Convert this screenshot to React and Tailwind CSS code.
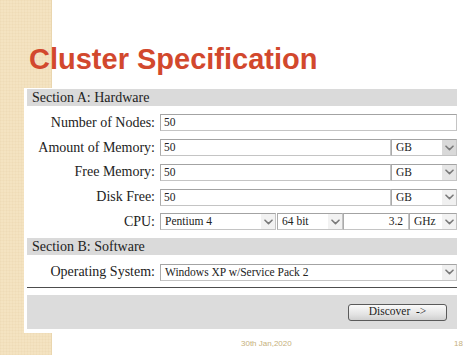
import React from "react";

const serif = "font-['Liberation_Serif','Times_New_Roman',serif]";

function Chevron() {
  return (
    <svg width="9" height="6" viewBox="0 0 9 6" fill="none">
      <path d="M1 1.2 L4.5 4.6 L8 1.2" stroke="#7a7a7a" strokeWidth="1.6" strokeLinecap="round" strokeLinejoin="round" />
    </svg>
  );
}

function Input({ children, className = "", right = false }) {
  return (
    <div
      className={`h-full border border-[#c4c4c4] border-t-[#a3a3a3] border-l-[#ababab] bg-white text-[11.5px] text-[#222] flex items-center ${
        right ? "justify-end pr-[5px]" : "pl-[3px]"
      } ${className}`}
    >
      {children}
    </div>
  );
}

function Select({ children, className = "", arrowBg = "bg-[#e3e3e3]" }) {
  return (
    <div
      className={`h-full border border-[#c4c4c4] border-t-[#a3a3a3] border-l-[#ababab] bg-white text-[11.5px] text-[#222] flex items-center ${className}`}
    >
      <div className="flex-1 pl-[4px] truncate">{children}</div>
      <div className={`w-[14px] h-full flex items-center justify-center ${arrowBg}`}>
        <Chevron />
      </div>
    </div>
  );
}

function Row({ label, children }) {
  return (
    <div className="flex items-center h-[24.75px]">
      <div className="w-[128px] text-right text-[14px] leading-none text-[#222]">{label}</div>
      <div className="ml-[5px] w-[297px] h-[17px] flex">{children}</div>
    </div>
  );
}

function Header({ children, className = "" }) {
  return (
    <div className={`h-[17px] bg-[#dadada] pl-[5px] flex items-center text-[14px] leading-none text-[#222] ${className}`}>
      {children}
    </div>
  );
}

export default function App() {
  return (
    <div className="w-[474px] h-[355px] overflow-hidden flex flex-col bg-[#f4e3c1] bg-[linear-gradient(to_right,transparent_51px,#ead6ae_51px,#ead6ae_52px,#ffffff_52px),repeating-linear-gradient(0deg,rgba(190,150,90,0.05)_0px,rgba(190,150,90,0.05)_1px,transparent_1px,transparent_3px),repeating-linear-gradient(90deg,rgba(190,150,90,0.05)_0px,rgba(190,150,90,0.05)_1px,transparent_1px,transparent_3px)]">
      <h1 className="mt-[44.5px] ml-[29px] text-[29px] leading-none font-bold text-[#d2482d] font-['Liberation_Sans',Arial,sans-serif]">
        Cluster Specification
      </h1>

      <div className={`mt-[14.5px] ml-[24px] w-[436px] bg-white pl-[3px] pr-[3px] pt-[1px] pb-[4px] ${serif}`}>
        <Header>Section A: Hardware</Header>
        <div className="mt-[4.5px]">
          <Row label="Number of Nodes:">
            <Input className="w-full">50</Input>
          </Row>
          <Row label="Amount of Memory:">
            <Input className="w-[231px]">50</Input>
            <Select className="w-[66px]" arrowBg="bg-[#d9d9d9]">GB</Select>
          </Row>
          <Row label="Free Memory:">
            <Input className="w-[231px]">50</Input>
            <Select className="w-[66px]" arrowBg="bg-[#e6e6e6]">GB</Select>
          </Row>
          <Row label="Disk Free:">
            <Input className="w-[231px]">50</Input>
            <Select className="w-[66px]" arrowBg="bg-[#f0f0f0]">GB</Select>
          </Row>
          <Row label="CPU:">
            <Select className="w-[116px]" arrowBg="bg-[#f2f2f2]">Pentium 4</Select>
            <Select className="w-[66px] ml-[1px]" arrowBg="bg-[#f2f2f2]">64 bit</Select>
            <Input className="w-[66px]" right>3.2</Input>
            <Select className="w-[48px]" arrowBg="bg-[#f2f2f2]">GHz</Select>
          </Row>
        </div>
        <Header className="mt-[4px]">Section B: Software</Header>
        <div className="mt-[4.5px]">
          <Row label="Operating System:">
            <Select className="w-full" arrowBg="bg-[#f0f0f0]">Windows XP w/Service Pack 2</Select>
          </Row>
        </div>
        <div className="mt-[2.5px] h-[1px] bg-[#4d4d4d]" />
        <div className="mt-[7px] h-[34px] bg-[#dcdcdc] flex items-center justify-end pr-[10px]">
          <button className="w-[99px] h-[17px] rounded-[3px] border border-[#5a5a5a] bg-[linear-gradient(to_bottom,#fafafa,#e4e4e4_60%,#cfcfcf)] text-[11.5px] leading-none text-[#222] flex items-center justify-center">
            Discover&nbsp;&nbsp;-&gt;
          </button>
        </div>
      </div>

      <div className="flex items-center mt-[7px] font-['Liberation_Sans',Arial,sans-serif] text-[8px] leading-none text-[#c6b07c]">
        <span className="ml-[241px]">30th Jan,2020</span>
        <span className="ml-auto mr-[11px]">18</span>
      </div>
    </div>
  );
}
